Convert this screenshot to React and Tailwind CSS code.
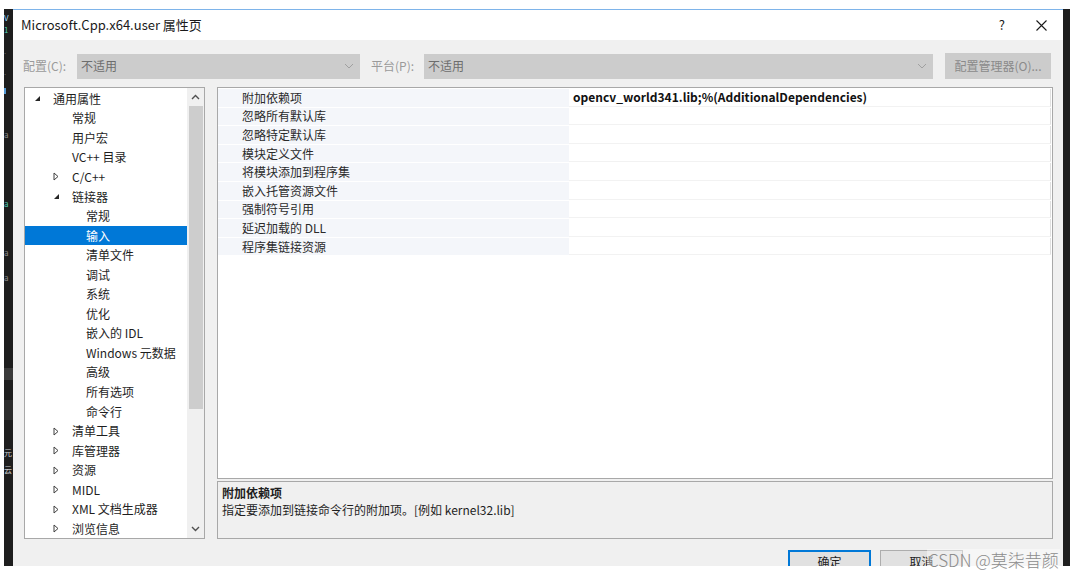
import React from 'react';

const FONT = { fontFamily: '"Noto Sans CJK SC", "Noto Sans", "Liberation Sans", sans-serif' };

const treeItems = [
  { label: '通用属性', level: 0, state: 'open' },
  { label: '常规', level: 1 },
  { label: '用户宏', level: 1 },
  { label: 'VC++ 目录', level: 1 },
  { label: 'C/C++', level: 1, state: 'closed' },
  { label: '链接器', level: 1, state: 'open' },
  { label: '常规', level: 2 },
  { label: '输入', level: 2, selected: true },
  { label: '清单文件', level: 2 },
  { label: '调试', level: 2 },
  { label: '系统', level: 2 },
  { label: '优化', level: 2 },
  { label: '嵌入的 IDL', level: 2 },
  { label: 'Windows 元数据', level: 2 },
  { label: '高级', level: 2 },
  { label: '所有选项', level: 2 },
  { label: '命令行', level: 2 },
  { label: '清单工具', level: 1, state: 'closed' },
  { label: '库管理器', level: 1, state: 'closed' },
  { label: '资源', level: 1, state: 'closed' },
  { label: 'MIDL', level: 1, state: 'closed' },
  { label: 'XML 文档生成器', level: 1, state: 'closed' },
  { label: '浏览信息', level: 1, state: 'closed' },
];

const properties = [
  { name: '附加依赖项', value: 'opencv_world341.lib;%(AdditionalDependencies)' },
  { name: '忽略所有默认库' },
  { name: '忽略特定默认库' },
  { name: '模块定义文件' },
  { name: '将模块添加到程序集' },
  { name: '嵌入托管资源文件' },
  { name: '强制符号引用' },
  { name: '延迟加载的 DLL' },
  { name: '程序集链接资源' },
];

const Chevron = ({ up }) => (
  <svg width="9" height="6" viewBox="0 0 9 6" className={up ? '' : 'rotate-180'}>
    <path d="M1 5 L4.5 1.5 L8 5" fill="none" stroke="#505050" strokeWidth="1.4" />
  </svg>
);

const Expander = ({ state }) => {
  if (state === 'open') {
    return (
      <svg width="7" height="7" viewBox="0 0 7 7">
        <path d="M6 1 L6 6 L1 6 Z" fill="#262626" />
      </svg>
    );
  }
  return (
    <svg width="6" height="9" viewBox="0 0 6 9">
      <path d="M1 1 L5 4.5 L1 8 Z" fill="none" stroke="#404040" strokeWidth="1" />
    </svg>
  );
};

const Combo = ({ width, text }) => (
  <div className={`${width} h-[25px] bg-[#cccccc] flex items-center justify-between pl-[4px] pr-[6px]`}>
    <span className="text-[12px] text-[#6d6d6d]">{text}</span>
    <svg width="10" height="6" viewBox="0 0 10 6">
      <path d="M1 1 L5 5 L9 1" fill="none" stroke="#a0a0a0" strokeWidth="1" />
    </svg>
  </div>
);

const TreeRow = ({ item }) => {
  const indent = item.level === 0 ? 'pl-[9px]' : item.level === 1 ? 'pl-[28px]' : 'pl-[61px]';
  return (
    <div
      className={`h-[19.55px] flex items-center ${indent} ${
        item.selected ? 'bg-[#0078d7] text-white' : 'text-[#1e1e1e]'
      }`}
    >
      {item.level < 2 && (
        <span className="w-[14px] flex items-center justify-start">
          {item.state && <Expander state={item.state} />}
        </span>
      )}
      <span className={`text-[12px] ${item.level < 2 ? 'pl-[5px]' : ''}`}>{item.label}</span>
    </div>
  );
};

export default function App() {
  return (
    <div className="w-[1079px] h-[579px] bg-white overflow-hidden relative" style={FONT}>
      <div className="flex pt-[9px] pl-[4px] h-[566px]">
        {/* editor window peeking out on the left */}
        <div className="w-[9px] shrink-0 bg-[#1e1e1e] flex flex-col text-[8px] leading-[9px] overflow-hidden">
          <span className="text-[#9cdcfe] mt-[4px] h-[9px]">V</span>
          <span className="text-[#4ec9b0] mt-[3px] h-[9px]">1</span>
          <span className="text-[#6a6a6a] mt-[12px] h-[9px]">.</span>
          <span className="text-[#6a6a6a] mt-[12px] h-[9px]">.</span>
          <span className="bg-[#569cd6] w-[2px] h-[6px] mt-[12px]" />
          <span className="text-[#8a8a8a] mt-[36px] h-[9px]">a</span>
          <span className="text-[#4ec9b0] mt-[60px] h-[9px]">a</span>
          <span className="text-[#8a8a8a] mt-[40px] h-[9px]">a</span>
          <span className="text-[#8a8a8a] mt-[16px] h-[9px]">a</span>
          <span className="bg-[#3a3a3a] h-[12px] mt-[86px]" />
          <span className="bg-[#2d2d2d] h-[20px] mt-[20px]" />
          <span className="text-[#c8c8c8] mt-[28px] h-[9px]">元</span>
          <span className="text-[#c8c8c8] mt-[8px] h-[9px]">云</span>
        </div>

        <div className="w-[1050px] shrink-0 flex flex-col border-t border-[#7eb4ea] overflow-hidden">
          {/* title bar */}
          <div className="h-[30px] shrink-0 bg-white flex items-center pl-[8px] pr-[16px]">
            <span className="text-[13px] text-[#1a1a1a]">Microsoft.Cpp.x64.user 属性页</span>
            <span className="ml-auto text-[13px] text-[#1a1a1a] mr-[31px]">?</span>
            <svg width="11" height="11" viewBox="0 0 11 11">
              <path d="M0.5 0.5 L10.5 10.5 M10.5 0.5 L0.5 10.5" stroke="#1a1a1a" strokeWidth="1.1" />
            </svg>
          </div>

          <div className="flex-1 min-h-0 overflow-hidden bg-[#f0f0f0] flex flex-col pl-[10px] pr-[10px]">
            {/* configuration bar */}
            <div className="shrink-0 flex items-center mt-[13px] h-[26px]">
              <span className="text-[12px] text-[#9a9a9a] w-[54px]">配置(C):</span>
              <Combo width="w-[283px]" text="不适用" />
              <span className="text-[12px] text-[#9a9a9a] ml-[11px] w-[53px]">平台(P):</span>
              <Combo width="w-[509px]" text="不适用" />
              <div className="ml-[12px] w-[106px] h-[26px] bg-[#cccccc] flex items-center justify-center text-[12px] text-[#8a8a8a]">
                配置管理器(O)...
              </div>
            </div>

            <div className="shrink-0 flex mt-[8px] h-[452px]">
              {/* category tree */}
              <div className="ml-[1px] w-[181px] border border-[#a8a8a8] bg-white flex">
                <div className="flex-1 pt-[1px] overflow-hidden">
                  {treeItems.map((item, i) => (
                    <TreeRow key={i} item={item} />
                  ))}
                </div>
                <div className="w-[17px] bg-[#f0f0f0] flex flex-col items-center">
                  <div className="h-[18px] flex items-center">
                    <Chevron up />
                  </div>
                  <div className="w-[14px] h-[303px] bg-[#cdcdcd]" />
                  <div className="flex-1" />
                  <div className="h-[18px] flex items-center">
                    <Chevron />
                  </div>
                </div>
              </div>

              <div className="ml-[12px] w-[836px] flex flex-col">
                {/* property grid */}
                <div className="h-[392px] border border-[#a8a8a8] bg-white pt-[1px]">
                  {properties.map((p, i) => (
                    <div key={i} className="h-[18.6px] flex border-b border-white">
                      <div className="w-[20px] bg-[#f4f6fa]" />
                      <div className="w-[331px] bg-[#f4f6fa] flex items-center pl-[4px] text-[12px] text-[#2a2a2a]">
                        {p.name}
                      </div>
                      <div className="w-[482px] flex items-center pl-[4px] border-b border-[#f2f2f2] border-r border-r-[#e0e0e0] text-[12px] font-bold text-[#111]">
                        {p.value}
                      </div>
                    </div>
                  ))}
                </div>

                {/* description */}
                <div className="mt-[2px] h-[58px] border border-[#a8a8a8] bg-[#f0f0f0] pl-[4px] pt-[2px] text-[12px] leading-[17px] text-[#1e1e1e]">
                  <div className="font-bold">附加依赖项</div>
                  <div>指定要添加到链接命令行的附加项。[例如 kernel32.lib]</div>
                </div>
              </div>
            </div>

            {/* dialog buttons */}
            <div className="shrink-0 flex mt-[11px] pl-[765px]">
              <div className="w-[83px] h-[24px] border-2 border-[#0078d7] bg-[#e1e1e1] flex items-center justify-center text-[12px] text-[#1e1e1e]">
                确定
              </div>
              <div className="ml-[9px] w-[83px] h-[24px] border border-[#adadad] bg-[#e1e1e1] flex items-center justify-center text-[12px] text-[#1e1e1e]">
                取消
              </div>
            </div>
          </div>
        </div>

        <div className="w-[7px] shrink-0 bg-[#1e1e1e]" />
      </div>

      {/* watermark */}
      <div className="absolute left-[927px] top-[549px] text-[17px] leading-[21px] font-light text-[#8c8c8c] bg-white/40 px-[1px]">
        CSDN @莫柒昔颜
      </div>
    </div>
  );
}
